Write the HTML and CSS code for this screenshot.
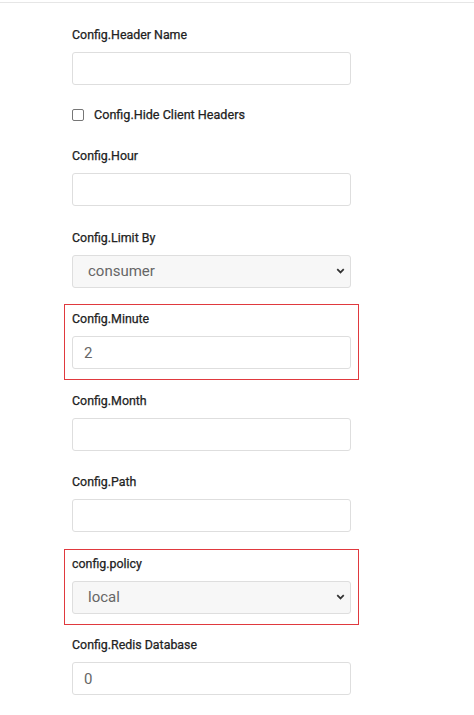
FILE: index.html
```html
<!DOCTYPE html>
<html>
<head>
<meta charset="utf-8">
<link rel="stylesheet" href="styles.css">
</head>
<body>
<div class="topbar"></div>
<form class="form">
  <div class="field">
    <label class="label">Config.Header Name</label>
    <input class="control" type="text" value="">
  </div>
  <div class="check-row">
    <input class="checkbox" type="checkbox">
    <span class="check-label">Config.Hide Client Headers</span>
  </div>
  <div class="field">
    <label class="label">Config.Hour</label>
    <input class="control" type="text" value="">
  </div>
  <div class="field">
    <label class="label">Config.Limit By</label>
    <select class="control select"><option>consumer</option></select>
  </div>
  <div class="field field-error">
    <label class="label">Config.Minute</label>
    <input class="control" type="text" value="2">
  </div>
  <div class="field">
    <label class="label">Config.Month</label>
    <input class="control" type="text" value="">
  </div>
  <div class="field">
    <label class="label">Config.Path</label>
    <input class="control" type="text" value="">
  </div>
  <div class="field field-error">
    <label class="label">config.policy</label>
    <select class="control select"><option>local</option></select>
  </div>
  <div class="field">
    <label class="label">Config.Redis Database</label>
    <input class="control" type="text" value="0">
  </div>
</form>
</body>
</html>
```
FILE: styles.css
```css
html, body {
  margin: 0;
  padding: 0;
  background: #ffffff;
  font-family: Roboto, "Liberation Sans", sans-serif;
}
.topbar {
  height: 2px;
  border-bottom: 1px solid #e6e6e6;
}
.form {
  padding: 22px 0 0 72px;
  width: 279px;
  display: flex;
  flex-direction: column;
}
.field {
  display: flex;
  flex-direction: column;
  margin-bottom: 21.5px;
}
.label {
  font-size: 12.4px;
  font-weight: 400;
  line-height: 20px;
  color: #222222;
  margin-bottom: 7px;
  -webkit-text-stroke: 0.25px #222222;
}
.control {
  box-sizing: border-box;
  width: 279px;
  height: 33px;
  margin: 0;
  border: 1px solid #dedede;
  border-radius: 3px;
  background: #ffffff;
  font-family: Roboto, "Liberation Sans", sans-serif;
  font-size: 15px;
  color: #666666;
  padding: 0 11px;
  outline: none;
}
.select {
  appearance: none;
  -webkit-appearance: none;
  background-color: #f7f7f7;
  padding-left: 15px;
  background-image: url("data:image/svg+xml,%3Csvg xmlns='http://www.w3.org/2000/svg' width='10' height='7' viewBox='0 0 10 7'%3E%3Cpath d='M1.2 1.4l3.8 3.8 3.8-3.8' fill='none' stroke='%23333' stroke-width='2'/%3E%3C/svg%3E");
  background-repeat: no-repeat;
  background-position: right 5px center;
  background-size: 9px 6px;
}
.check-row {
  display: flex;
  align-items: center;
  height: 18px;
  margin: -1px 0 22.5px;
}
.checkbox {
  appearance: none;
  -webkit-appearance: none;
  box-sizing: border-box;
  width: 12px;
  height: 12px;
  margin: 0 10px 0 0;
  border: 1px solid #767676;
  border-radius: 2px;
  background: #fff;
}
.check-label {
  font-size: 12.6px;
  font-weight: 400;
  color: #222222;
  -webkit-text-stroke: 0.25px #222222;
}
.field-error {
  margin: -5px -8px 10.5px;
  padding: 4px 7px 10px;
  border: 1px solid #e0393e;
}
```
